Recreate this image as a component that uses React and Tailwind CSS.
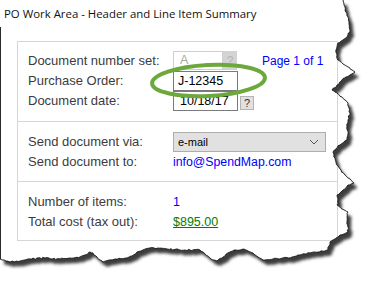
import React from "react";

const EDGE = [
  [343, 0], [344, 4], [345, 7], [346, 12], [348, 17], [349, 24], [350, 30], [348, 35], [347, 37], [343, 40], [338, 43], [337, 47], [336, 50], [337, 55], [338, 60], [343, 64], [348, 67], [352, 70], [355, 72], [350, 75], [346, 77], [342, 80], [337, 85], [332, 90], [337, 93], [342, 97], [345, 100], [348, 103], [349, 108], [350, 113], [348, 120], [347, 127], [348, 134], [347, 140], [343, 143], [340, 145], [336, 149], [333, 152], [334, 155], [335, 158], [336, 162], [337, 165], [341, 170], [345, 175], [350, 179], [354, 183], [348, 185], [343, 190], [337, 195], [338, 200], [337, 205], [342, 209], [348, 212], [347, 217], [347, 222], [348, 227], [348, 232], [344, 234], [340, 235], [335, 239], [330, 242], [329, 246], [328, 250], [325, 251], [318, 252], [310, 253], [305, 254], [300, 255], [292, 257], [283, 258], [273, 259], [263, 260], [258, 257], [253, 253], [248, 251], [243, 249], [236, 250], [230, 252], [223, 257], [217, 261], [213, 260], [210, 258], [205, 254], [200, 250], [185, 250], [167, 249], [158, 248], [150, 248], [143, 250], [137, 252], [132, 256], [127, 258], [115, 259], [103, 262], [100, 260], [97, 257], [93, 253], [90, 252], [85, 255], [80, 257], [70, 258], [60, 259], [45, 258], [30, 259], [20, 261], [10, 262], [4, 260], [0, 259],
];

function jitter(points) {
  const out = [];
  let seed = 7;
  const rnd = () => {
    seed = (seed * 9301 + 49297) % 233280;
    return seed / 233280 - 0.5;
  };
  for (let i = 0; i < points.length; i++) {
    const [x1, y1] = points[i];
    out.push([x1, y1]);
    if (i < points.length - 1) {
      const [x2, y2] = points[i + 1];
      const steps = Math.max(1, Math.round(Math.hypot(x2 - x1, y2 - y1) / 2));
      for (let s = 1; s < steps; s++) {
        const t = s / steps;
        out.push([x1 + (x2 - x1) * t + rnd() * 1.4, y1 + (y2 - y1) * t + rnd() * 1.4]);
      }
    }
  }
  return out;
}

const PTS = jitter(EDGE);
const EDGE_STR = PTS.map(([x, y]) => `${x.toFixed(1)},${y.toFixed(1)}`).join(" ");
const PAPER_STR = `0,0 ${EDGE_STR}`;

function Row({ label, children }) {
  return (
    <div className="flex h-5 items-center">
      <div className="w-[145px] shrink-0 text-[13px] text-[#3c3c3c]">{label}</div>
      <div className="flex items-center">{children}</div>
    </div>
  );
}

export default function App() {
  return (
    <div
      className="relative h-[288px] w-[377px] overflow-hidden bg-white"
      style={{ fontFamily: '"Liberation Sans", Arial, sans-serif' }}
    >
      <div
        className="flex h-[27px] items-center pl-[4px] text-[11.4px] text-[#111]"
        style={{ fontFamily: '"Open Sans", "Noto Sans", sans-serif' }}
      >
        PO Work Area - Header and Line Item Summary
      </div>
      <div className="h-[232px] border-l border-[#2a2a2a] pl-[16px] pt-[14px]">
        <div className="w-[321px] border border-[#d6d6d6]">
          <div className="border-b border-[#d6d6d6] pl-[10px] pt-[9px] pb-[10px]">
            <Row label="Document number set:">
              <div className="flex h-5 items-start">
                <div className="flex h-[19px] w-[50px] items-center border border-[#cfcfcf] pl-[6px] text-[12.5px] text-[#a8a8a8]">
                  A
                </div>
                <div className="flex h-[19px] w-[14px] items-center justify-center bg-[#d3d3d3] text-[12px] text-[#b5b5b5]">
                  ?
                </div>
                <div className="ml-[25px] flex h-[19px] items-center text-[12px] text-[#0000ff]">Page 1 of 1</div>
              </div>
            </Row>
            <Row label="Purchase Order:">
              <div className="flex h-5 w-[65px] items-center border border-[#7a7a7a] pl-[4px] text-[12.5px] text-black">
                J-12345
              </div>
            </Row>
            <Row label="Document date:">
              <div className="flex h-5 w-[65px] items-center border border-[#7a7a7a] pl-[6px] text-[12.5px] text-black">
                10/18/17
              </div>
              <div className="ml-[2px] mt-[4px] flex h-[14px] w-[14px] items-center justify-center border border-[#b4b4b4] bg-[#e1e1e1] text-[11px] text-[#333]">
                ?
              </div>
            </Row>
          </div>
          <div className="border-b border-[#d6d6d6] pl-[10px] pt-[10px] pb-[9px]">
            <Row label="Send document via:">
              <div className="relative flex h-5 w-[153px] items-center border border-[#adadad] bg-[#e1e1e1] pl-[4px] text-[11px] text-black">
                e-mail
                <svg className="absolute right-[6px] top-[6px]" width="10" height="6" viewBox="0 0 10 6">
                  <polyline points="1,1 5,5 9,1" fill="none" stroke="#555" strokeWidth="1" />
                </svg>
              </div>
            </Row>
            <Row label="Send document to:">
              <div className="text-[12.3px] text-[#0000ff]">info@SpendMap.com</div>
            </Row>
          </div>
          <div className="pl-[10px] pt-[10px] pb-[8px]">
            <Row label="Number of items:">
              <div className="text-[12.5px] text-[#0000ff]">1</div>
            </Row>
            <Row label="Total cost (tax out):">
              <div className="text-[12.5px] text-[#008000] underline">$895.00</div>
            </Row>
          </div>
        </div>
      </div>

      <svg
        className="pointer-events-none absolute left-0 top-0"
        width="377"
        height="288"
        viewBox="0 0 377 288"
      >
        <defs>
          <mask id="outside">
            <rect x="0" y="0" width="377" height="288" fill="white" />
            <polygon points={PAPER_STR} fill="black" />
          </mask>
          <filter id="blur" x="-10%" y="-10%" width="120%" height="120%">
            <feGaussianBlur stdDeviation="1.7" />
          </filter>
        </defs>
        <g mask="url(#outside)">
          <rect x="0" y="0" width="377" height="288" fill="white" />
          <polygon points={PAPER_STR} transform="translate(4,5)" fill="#3c3c3c" filter="url(#blur)" />
        </g>
        <polyline points={EDGE_STR} fill="none" stroke="#1a1a1a" strokeWidth="0.9" />
        <ellipse
          cx="208.5"
          cy="80.5"
          rx="56.5"
          ry="15.5"
          transform="rotate(-3 208.5 80.5)"
          fill="none"
          stroke="#6ca83c"
          strokeWidth="4"
        />
      </svg>
    </div>
  );
}
